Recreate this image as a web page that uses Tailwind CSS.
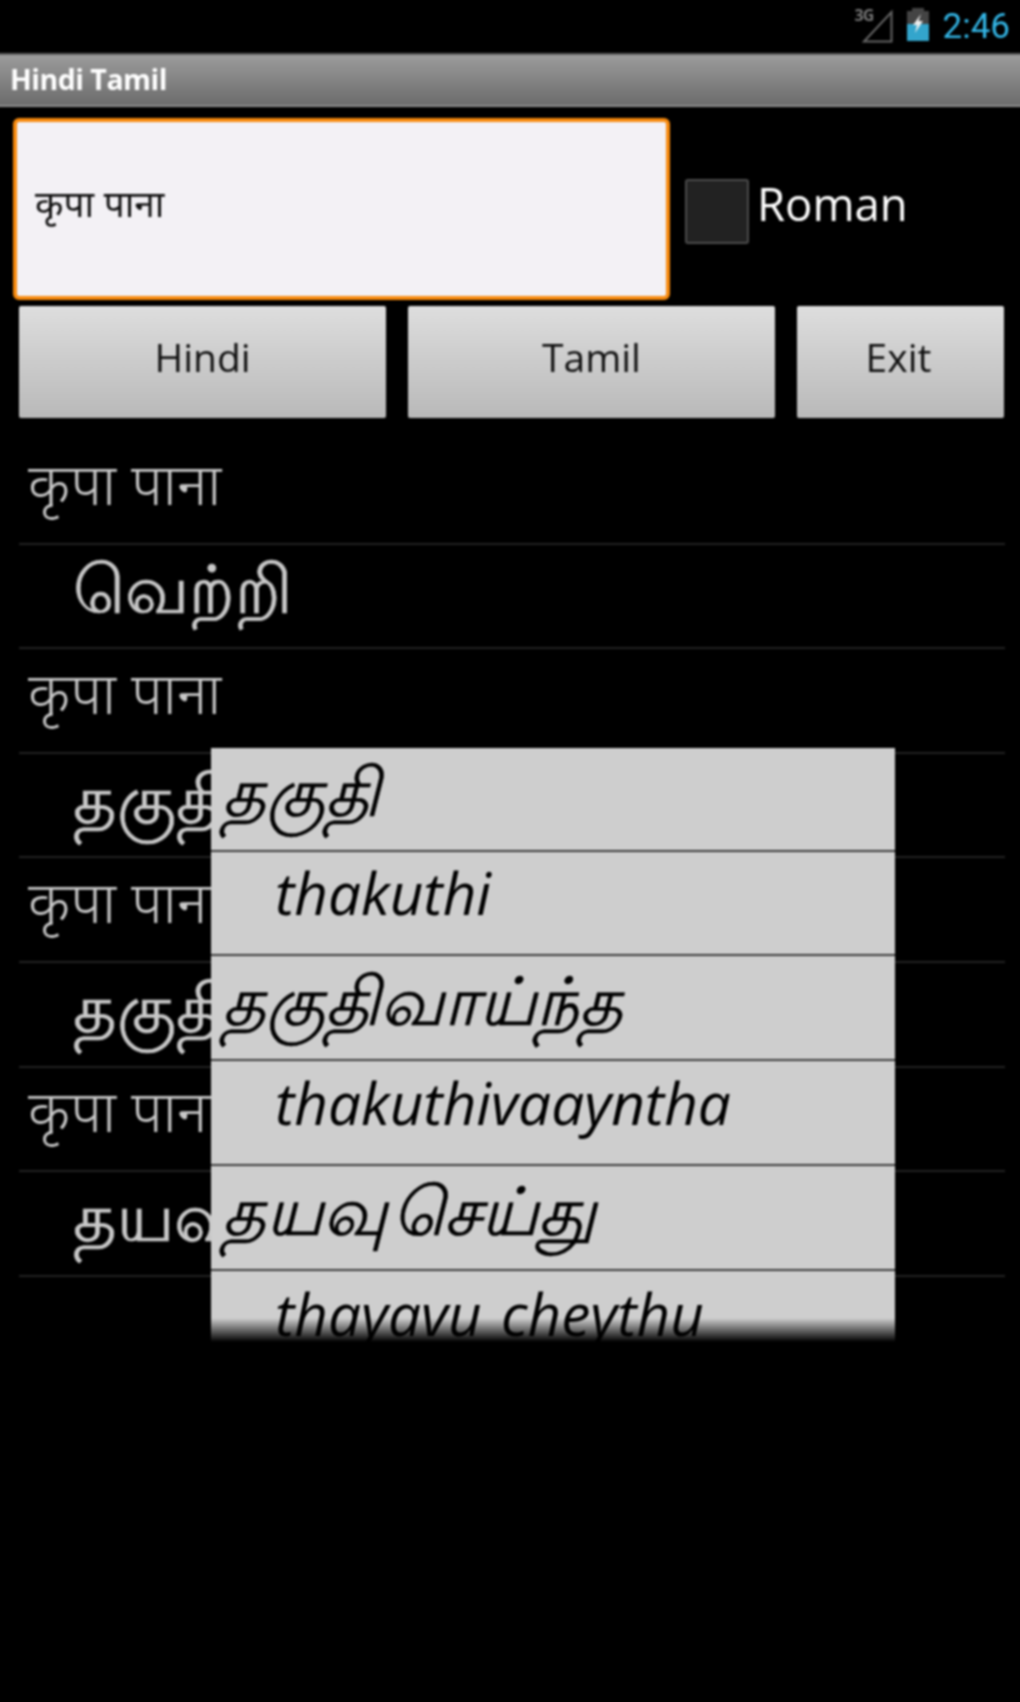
<!DOCTYPE html>
<html lang="en">
<head>
    <meta charset="UTF-8">
    <meta name="viewport" content="width=device-width, initial-scale=1.0">
    <title>Hindi Tamil</title>
    <script src="https://cdn.jsdelivr.net/npm/@tailwindcss/browser@4"></script>
</head>
<body class="bg-black overflow-hidden font-['Open_Sans','Noto_Sans',sans-serif]">
    <div class="relative w-[1020px] h-[1702px] bg-black blur-[0.8px]">
        <!-- status bar -->
        <div class="h-[53px] flex items-center justify-end pr-[10px] gap-[14px]">
            <div class="relative w-[38px] h-[36px] mt-[-4px]">
                <span class="absolute left-0 top-[-1px] text-[16px] leading-[18px] font-bold tracking-[-1px] text-[#777]">3G</span>
                <svg class="absolute inset-0" width="38" height="36" viewBox="0 0 38 36"><path d="M9 34.5L36.5 5V34.5Z" fill="none" stroke="#666" stroke-width="2"/></svg>
            </div>
            <svg width="22" height="33" viewBox="0 0 22 33" class="mt-[-5px]">
                <rect x="5" y="0" width="12" height="3" fill="#444"/>
                <rect x="0" y="3" width="22" height="30" fill="#444"/>
                <rect x="0" y="16" width="22" height="17" fill="#33a5cc"/>
                <path d="M14 6L6 17H10L8 25L16 13H11.5Z" fill="#eee"/>
            </svg>
            <span class="text-[35px] leading-none font-['Roboto'] text-[#33b5e5]">2:46</span>
        </div>

        <!-- title bar -->
        <div class="h-[54px] -mx-[4px] flex items-center pl-[14px] border-t-2 border-b-2 border-t-[#5c5c5c] border-b-[#8c8c8c] bg-gradient-to-b from-[#9c9c9c] to-[#6c6c6c]">
            <span class="text-[28.5px] font-bold text-white tracking-[-0.5px] mt-[-2px]">Hindi Tamil</span>
        </div>

        <!-- input row -->
        <div class="flex pt-[11px] pl-[13px]">
            <div class="w-[657px] h-[182px] flex items-center pl-[18px] pb-[12px] bg-[#f3f1f5] border-4 border-[#f78a0e] rounded-[6px]">
                <span class="text-[37px] text-[#111] font-['Noto_Sans',sans-serif]">कृपा पाना</span>
            </div>
            <div class="flex items-start pt-[61px] pl-[15px]">
                <div class="w-[64px] h-[65px] bg-[#222] border-2 border-[#4c4c4c] rounded-[3px]"></div>
                <span class="ml-[8px] mt-[-6px] text-[45.5px] leading-[60px] text-white">Roman</span>
            </div>
        </div>

        <!-- buttons -->
        <div class="flex pt-[6px] pl-[19px] gap-[22px]">
            <button class="w-[367px] h-[112px] pb-[9px] text-[39px] text-[#111] bg-gradient-to-b from-[#dedede] to-[#b9b9b9] rounded-[2px]">Hindi</button>
            <button class="w-[367px] h-[112px] pb-[9px] text-[39px] text-[#111] bg-gradient-to-b from-[#dedede] to-[#b9b9b9] rounded-[2px]">Tamil</button>
            <button class="w-[207px] h-[112px] pb-[9px] pr-[4px] text-[39px] text-[#111] bg-gradient-to-b from-[#dedede] to-[#b9b9b9] rounded-[2px]">Exit</button>
        </div>

        <!-- word list -->
        <div class="ml-[19px] w-[986px] pt-[22px] text-[#c8c8c8] font-['Noto_Sans',sans-serif]">
            <div class="h-[104.6px] pl-[9px] pb-[18px] flex items-center border-b-2 border-[#222] text-[58px] font-light">कृपा पाना</div>
            <div class="h-[104.6px] pl-[54px] pb-[18px] flex items-center border-b-2 border-[#222] text-[67px] [-webkit-text-stroke:0.7px]">வெற்றி</div>
            <div class="h-[104.6px] pl-[9px] pb-[18px] flex items-center border-b-2 border-[#222] text-[58px] font-light">कृपा पाना</div>
            <div class="h-[104.6px] pl-[54px] pb-[16px] flex items-center border-b-2 border-[#222] text-[67px] [-webkit-text-stroke:0.7px]">தகுதி</div>
            <div class="h-[104.6px] pl-[9px] pb-[18px] flex items-center border-b-2 border-[#222] text-[58px] font-light">कृपा पाना</div>
            <div class="h-[104.6px] pl-[54px] pb-[16px] flex items-center border-b-2 border-[#222] text-[67px] [-webkit-text-stroke:0.7px]">தகுதி</div>
            <div class="h-[104.6px] pl-[9px] pb-[18px] flex items-center border-b-2 border-[#222] text-[58px] font-light">कृपा पाना</div>
            <div class="h-[104.6px] pl-[54px] pb-[16px] flex items-center border-b-2 border-[#222] text-[67px] [-webkit-text-stroke:0.7px]">தயவு</div>
        </div>

        <!-- suggestions dropdown -->
        <div class="absolute left-[211px] top-[748px] w-[684px] h-[594px] overflow-hidden bg-[#cecece] text-black italic text-[58.5px]">
            <div class="h-[103.5px] pl-[11px] pb-[18px] flex items-center border-b-2 border-[#3c3c3c] text-[67px] [-webkit-text-stroke:0.5px]">தகுதி</div>
            <div class="h-[104.8px] pl-[64px] pb-[20px] flex items-center border-b-2 border-[#3c3c3c]">thakuthi</div>
            <div class="h-[104.8px] pl-[11px] pb-[16px] flex items-center border-b-2 border-[#3c3c3c] text-[67px] [-webkit-text-stroke:0.5px]">தகுதிவாய்ந்த</div>
            <div class="h-[104.8px] pl-[64px] pb-[20px] flex items-center border-b-2 border-[#3c3c3c]">thakuthivaayntha</div>
            <div class="h-[104.8px] pl-[11px] pb-[16px] flex items-center border-b-2 border-[#3c3c3c] text-[67px] [word-spacing:-12px] [-webkit-text-stroke:0.5px]">தயவு செய்து</div>
            <div class="h-[104.8px] pl-[64px] pb-[18px] flex items-center [word-spacing:4px]">thayavu cheythu</div>
            <div class="absolute bottom-0 inset-x-0 h-[24px] bg-gradient-to-b from-transparent to-black"></div>
        </div>
    </div>
</body>
</html>
